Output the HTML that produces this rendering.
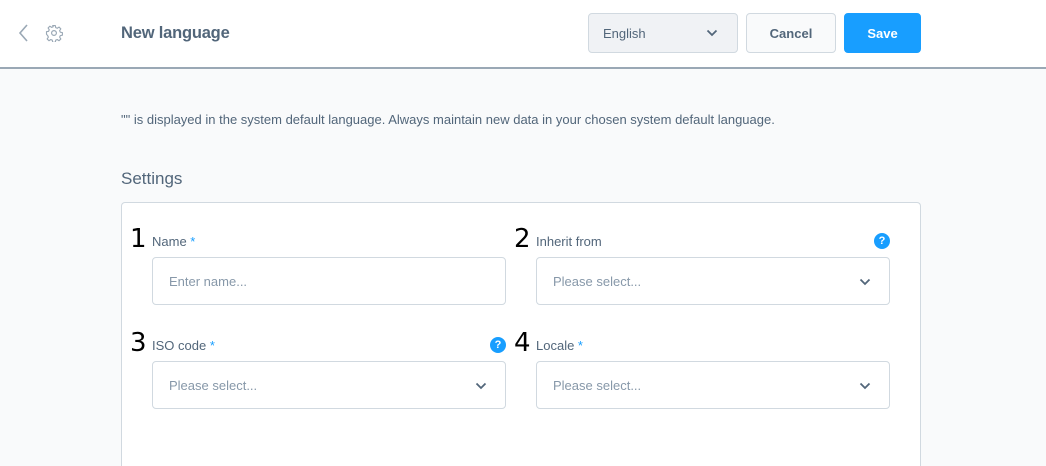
<!DOCTYPE html>
<html style="width:1046px;height:466px;overflow:hidden"><head><style>
*{box-sizing:border-box;margin:0;padding:0}
body{width:1046px;height:466px;overflow:hidden;background:#f9fafb;font-family:"Liberation Sans",sans-serif;position:relative;color:#52667a}
.hdr{position:absolute;left:0;top:0;width:1046px;height:69px;background:#fff;border-bottom:2px solid #9aa8b5}
.abs{position:absolute}
.title{left:121px;top:24px;font-size:16.5px;font-weight:bold;color:#52667a;letter-spacing:-0.2px}
.sel{left:588px;top:13px;width:150px;height:40px;background:#f0f2f5;border:1px solid #d1d9e0;border-radius:4px;font-size:13px;padding:12px 0 0 14px;color:#52667a}
.btn{top:13px;height:40px;border-radius:4px;font-size:13px;font-weight:bold;text-align:center;line-height:39px}
.cancel{left:746px;width:90px;background:#f9fafb;border:1px solid #d1d9e0;color:#52667a}
.save{left:844px;width:77px;background:#189eff;color:#fff;border:1px solid #189eff}
.info{left:121px;top:112px;font-size:13px;color:#52667a}
.set{left:121px;top:169px;font-size:17px;color:#52667a}
.card{left:121px;top:202px;width:800px;height:264px;background:#fff;border:1px solid #d1d9e0;border-bottom:none;border-radius:4px 4px 0 0}
.num{font-size:26px;color:#000;font-family:"DejaVu Sans","Liberation Sans",sans-serif}
.lbl{font-size:13px;color:#52667a}
.lbl b{color:#189eff;font-weight:normal}
.fld{width:354px;height:48px;background:#fff;border:1px solid #d1d9e0;border-radius:4px;font-size:13px;color:#8798a9;padding:16px 0 0 16px}
.q{width:16px;height:16px;border-radius:50%;background:#189eff;color:#fff;font-size:11px;font-weight:bold;text-align:center;line-height:16px}
</style></head><body>
<div class="hdr"></div>
<svg class="abs" style="left:17px;top:24px" width="14" height="18" viewBox="0 0 14 18"><path d="M10 1 L3 9 L10 17" fill="none" stroke="#9aa8b5" stroke-width="1.6"/></svg>
<svg class="abs" style="left:45px;top:24px" width="18" height="18" viewBox="0 0 24 24"><circle cx="12" cy="12" r="3.2" fill="none" stroke="#9aa8b5" stroke-width="1.6"/><path d="M10.3 2h3.4l.6 2.8 2 .9 2.4-1.6 2.4 2.4-1.6 2.4.9 2 2.8.6v3.4l-2.8.6-.9 2 1.6 2.4-2.4 2.4-2.4-1.6-2 .9-.6 2.8h-3.4l-.6-2.8-2-.9-2.4 1.6-2.4-2.4 1.6-2.4-.9-2L2 13.7v-3.4l2.8-.6.9-2-1.6-2.4 2.4-2.4 2.4 1.6 2-.9z" fill="none" stroke="#9aa8b5" stroke-width="1.5" stroke-linejoin="round"/></svg>
<div class="abs title">New language</div>
<div class="abs sel">English</div>
<svg class="abs" style="left:706px;top:29px" width="12" height="8" viewBox="0 0 12 8"><path d="M1.5 1.5 L6 6 L10.5 1.5" fill="none" stroke="#52667a" stroke-width="1.8"/></svg>
<div class="abs btn cancel">Cancel</div>
<div class="abs btn save">Save</div>
<div class="abs info">"" is displayed in the system default language. Always maintain new data in your chosen system default language.</div>
<div class="abs set">Settings</div>
<div class="abs card"></div>

<div class="abs num" style="left:130px;top:224px">1</div>
<div class="abs lbl" style="left:152px;top:234px">Name <b>*</b></div>
<div class="abs fld" style="left:152px;top:257px">Enter name...</div>

<div class="abs num" style="left:514px;top:224px">2</div>
<div class="abs lbl" style="left:536px;top:234px">Inherit from</div>
<div class="abs q" style="left:874px;top:233px">?</div>
<div class="abs fld" style="left:536px;top:257px">Please select...</div>
<svg class="abs" style="left:859px;top:278px" width="12" height="8" viewBox="0 0 12 8"><path d="M1.5 1.5 L6 6 L10.5 1.5" fill="none" stroke="#52667a" stroke-width="1.8"/></svg>

<div class="abs num" style="left:130px;top:328px">3</div>
<div class="abs lbl" style="left:152px;top:338px">ISO code <b>*</b></div>
<div class="abs q" style="left:490px;top:337px">?</div>
<div class="abs fld" style="left:152px;top:361px">Please select...</div>
<svg class="abs" style="left:475px;top:382px" width="12" height="8" viewBox="0 0 12 8"><path d="M1.5 1.5 L6 6 L10.5 1.5" fill="none" stroke="#52667a" stroke-width="1.8"/></svg>

<div class="abs num" style="left:514px;top:328px">4</div>
<div class="abs lbl" style="left:536px;top:338px">Locale <b>*</b></div>
<div class="abs fld" style="left:536px;top:361px">Please select...</div>
<svg class="abs" style="left:859px;top:382px" width="12" height="8" viewBox="0 0 12 8"><path d="M1.5 1.5 L6 6 L10.5 1.5" fill="none" stroke="#52667a" stroke-width="1.8"/></svg>
</body></html>
